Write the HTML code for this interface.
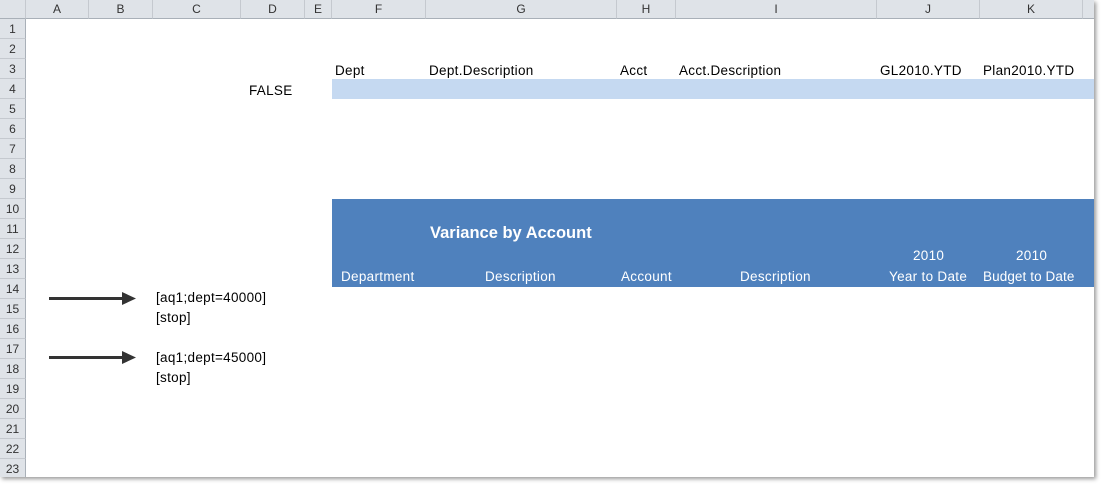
<!DOCTYPE html>
<html><head><meta charset="utf-8"><style>
body{margin:0;width:1101px;height:484px;background:#fff;position:relative;overflow:hidden;font-family:"Liberation Sans",sans-serif;}
.sheet{position:absolute;left:0;top:0;width:1094px;height:477px;background:#fff;box-shadow:2px 2px 4px #999;overflow:hidden;}
.colh{position:absolute;top:0;height:19px;background:#dfe3e8;border-right:1px solid #c5c9cf;border-bottom:1px solid #a9b0b8;font-size:12px;color:#333;text-align:center;line-height:19px;box-sizing:border-box;}
.rowh{position:absolute;left:0;width:26px;height:20px;background:#dfe3e8;border-bottom:1px solid #c5c9cf;border-right:1px solid #a9b0b8;font-size:12px;color:#333;text-align:center;line-height:20px;box-sizing:border-box;}
.t{position:absolute;font-size:13.5px;letter-spacing:0.3px;color:#000;white-space:nowrap;line-height:20px;}
.w{color:#fff;}
</style></head><body>
<div class="sheet">
<div class="colh" style="left:0;width:26px"></div>
<div class="colh" style="left:26px;width:63px">A</div>
<div class="colh" style="left:89px;width:64px">B</div>
<div class="colh" style="left:153px;width:88px">C</div>
<div class="colh" style="left:241px;width:64px">D</div>
<div class="colh" style="left:305px;width:27px">E</div>
<div class="colh" style="left:332px;width:94px">F</div>
<div class="colh" style="left:426px;width:191px">G</div>
<div class="colh" style="left:617px;width:59px">H</div>
<div class="colh" style="left:676px;width:201px">I</div>
<div class="colh" style="left:877px;width:103px">J</div>
<div class="colh" style="left:980px;width:103px">K</div>
<div class="colh" style="left:1083px;width:20px"></div>
<div class="rowh" style="top:19px">1</div><div class="rowh" style="top:39px">2</div><div class="rowh" style="top:59px">3</div><div class="rowh" style="top:79px">4</div><div class="rowh" style="top:99px">5</div><div class="rowh" style="top:119px">6</div><div class="rowh" style="top:139px">7</div><div class="rowh" style="top:159px">8</div><div class="rowh" style="top:179px">9</div><div class="rowh" style="top:199px">10</div><div class="rowh" style="top:219px">11</div><div class="rowh" style="top:239px">12</div><div class="rowh" style="top:259px">13</div><div class="rowh" style="top:279px">14</div><div class="rowh" style="top:299px">15</div><div class="rowh" style="top:319px">16</div><div class="rowh" style="top:339px">17</div><div class="rowh" style="top:359px">18</div><div class="rowh" style="top:379px">19</div><div class="rowh" style="top:399px">20</div><div class="rowh" style="top:419px">21</div><div class="rowh" style="top:439px">22</div><div class="rowh" style="top:459px">23</div>

<div class="t" style="left:335px;top:61px">Dept</div>
<div class="t" style="left:429px;top:61px">Dept.Description</div>
<div class="t" style="left:620px;top:61px">Acct</div>
<div class="t" style="left:679px;top:61px">Acct.Description</div>
<div class="t" style="left:880px;top:61px">GL2010.YTD</div>
<div class="t" style="left:983px;top:61px">Plan2010.YTD</div>
<div class="t" style="left:249px;top:81px">FALSE</div>
<div style="position:absolute;left:332px;top:79px;width:770px;height:20px;background:#c5d9f1"></div>

<div style="position:absolute;left:332px;top:199px;width:770px;height:88px;background:#4f81bd"></div>
<div class="t w" style="left:430px;top:223px;font-size:16.5px;letter-spacing:0;font-weight:bold">Variance by Account</div>
<div class="t w" style="left:913px;top:246px">2010</div>
<div class="t w" style="left:1016px;top:246px">2010</div>
<div class="t w" style="left:341px;top:267px">Department</div>
<div class="t w" style="left:485px;top:267px">Description</div>
<div class="t w" style="left:621px;top:267px">Account</div>
<div class="t w" style="left:740px;top:267px">Description</div>
<div class="t w" style="left:889px;top:267px">Year to Date</div>
<div class="t w" style="left:983px;top:267px;letter-spacing:0.1px">Budget to Date</div>

<svg style="position:absolute;left:0;top:0" width="1101" height="484">
<line x1="49" y1="298.5" x2="124" y2="298.5" stroke="#333" stroke-width="3"/>
<polygon points="122,292 136,298.5 122,305" fill="#333"/>
<line x1="49" y1="357.5" x2="124" y2="357.5" stroke="#333" stroke-width="3"/>
<polygon points="122,351 136,357.5 122,364" fill="#333"/>
</svg>
<div class="t" style="left:156px;top:288px">[aq1;dept=40000]</div>
<div class="t" style="left:156px;top:308px">[stop]</div>
<div class="t" style="left:156px;top:348px">[aq1;dept=45000]</div>
<div class="t" style="left:156px;top:368px">[stop]</div>
</div>
</body></html>
